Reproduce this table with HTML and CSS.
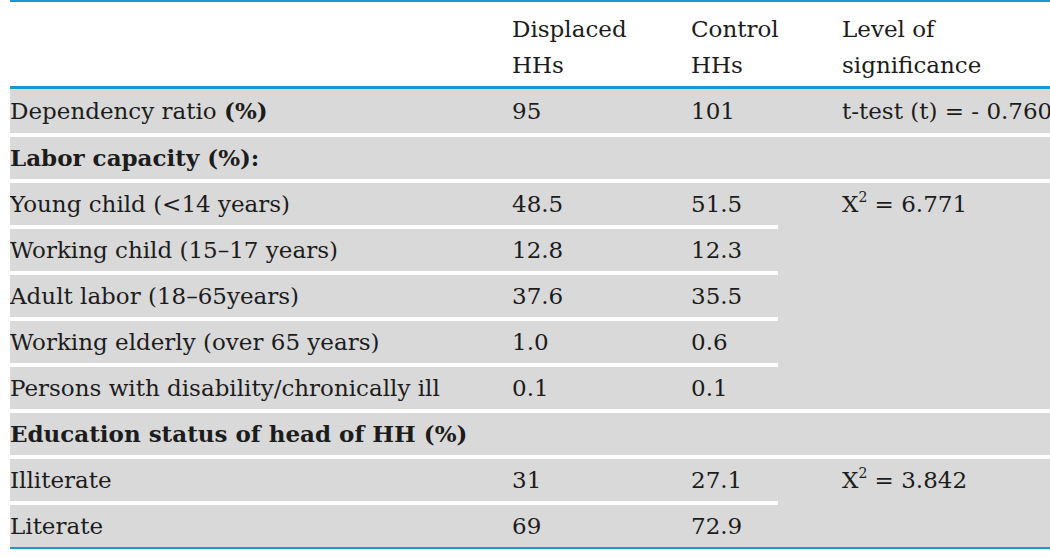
FILE: index.html
```html
<!DOCTYPE html>
<html lang="en">
<head>
<meta charset="utf-8">
<title>Household characteristics</title>
<link rel="stylesheet" href="styles.css">
</head>
<body>
<div class="wrap">
<table class="t">
<colgroup>
<col class="c1"><col class="c2"><col class="c3"><col class="c4">
</colgroup>
<thead>
<tr>
<th></th>
<th class="p2">Displaced<br>HHs</th>
<th class="p3">Control<br>HHs</th>
<th class="p4">Level of<br>significance</th>
</tr>
</thead>
<tbody>
<tr class="first">
<td>Dependency ratio <b>(%)</b></td>
<td class="p2">95</td>
<td class="p3">101</td>
<td class="p4">t-test (t) = - 0.760</td>
</tr>
<tr>
<td><b>Labor capacity (%):</b></td>
<td class="p2"></td>
<td class="p3"></td>
<td class="p4"></td>
</tr>
<tr>
<td>Young child (&lt;14 years)</td>
<td class="p2">48.5</td>
<td class="p3">51.5</td>
<td class="p4" rowspan="5">X<sup>2</sup> = 6.771</td>
</tr>
<tr>
<td>Working child (15–17 years)</td>
<td class="p2">12.8</td>
<td class="p3">12.3</td>
</tr>
<tr>
<td>Adult labor (18–65years)</td>
<td class="p2">37.6</td>
<td class="p3">35.5</td>
</tr>
<tr>
<td>Working elderly (over 65 years)</td>
<td class="p2">1.0</td>
<td class="p3">0.6</td>
</tr>
<tr>
<td>Persons with disability/chronically ill</td>
<td class="p2">0.1</td>
<td class="p3">0.1</td>
</tr>
<tr>
<td><b>Education status of head of HH (%)</b></td>
<td class="p2"></td>
<td class="p3"></td>
<td class="p4"></td>
</tr>
<tr>
<td>Illiterate</td>
<td class="p2">31</td>
<td class="p3">27.1</td>
<td class="p4 end" rowspan="2">X<sup>2</sup> = 3.842</td>
</tr>
<tr class="last">
<td>Literate</td>
<td class="p2">69</td>
<td class="p3">72.9</td>
</tr>
</tbody>
</table>
</div>
</body>
</html>
```
FILE: styles.css
```css
html, body {
  margin: 0;
  padding: 0;
  background: #ffffff;
}

.wrap {
  margin-left: 10px;
  overflow: hidden;
}

.t {
  border-collapse: separate;
  border-spacing: 0;
  width: 1120px;
  table-layout: fixed;
  font-family: "DejaVu Serif", "Liberation Serif", serif;
  font-size: 23px;
  line-height: 36px;
  color: #1c1c1c;
}

.c1 { width: 490px; }
.c2 { width: 179px; }
.c3 { width: 99px; }
.c4 { width: 352px; }

.t th {
  font-weight: normal;
  text-align: left;
  vertical-align: top;
  padding: 9px 0 3px 0;
  height: 72px;
  border-top: 2px solid #1a98d3;
  border-bottom: 3px solid #1a98d3;
}

.t td {
  background: #d9d9d9;
  text-align: left;
  vertical-align: top;
  padding: 3px 0;
  height: 36px;
  border-top: 4px solid #ffffff;
  white-space: nowrap;
}

.t tr.first td {
  border-top: 0;
  padding: 4px 0;
}

.t tr.last td,
.t td.end {
  border-bottom: 2px solid #1a98d3;
}

.p2 { padding-left: 12px !important; }
.p3 { padding-left: 12px !important; }
.p4 { padding-left: 64px !important; }

.t sup {
  font-size: 14px;
  line-height: 0;
  vertical-align: 10px;
}

.t b {
  font-weight: bold;
}
```
